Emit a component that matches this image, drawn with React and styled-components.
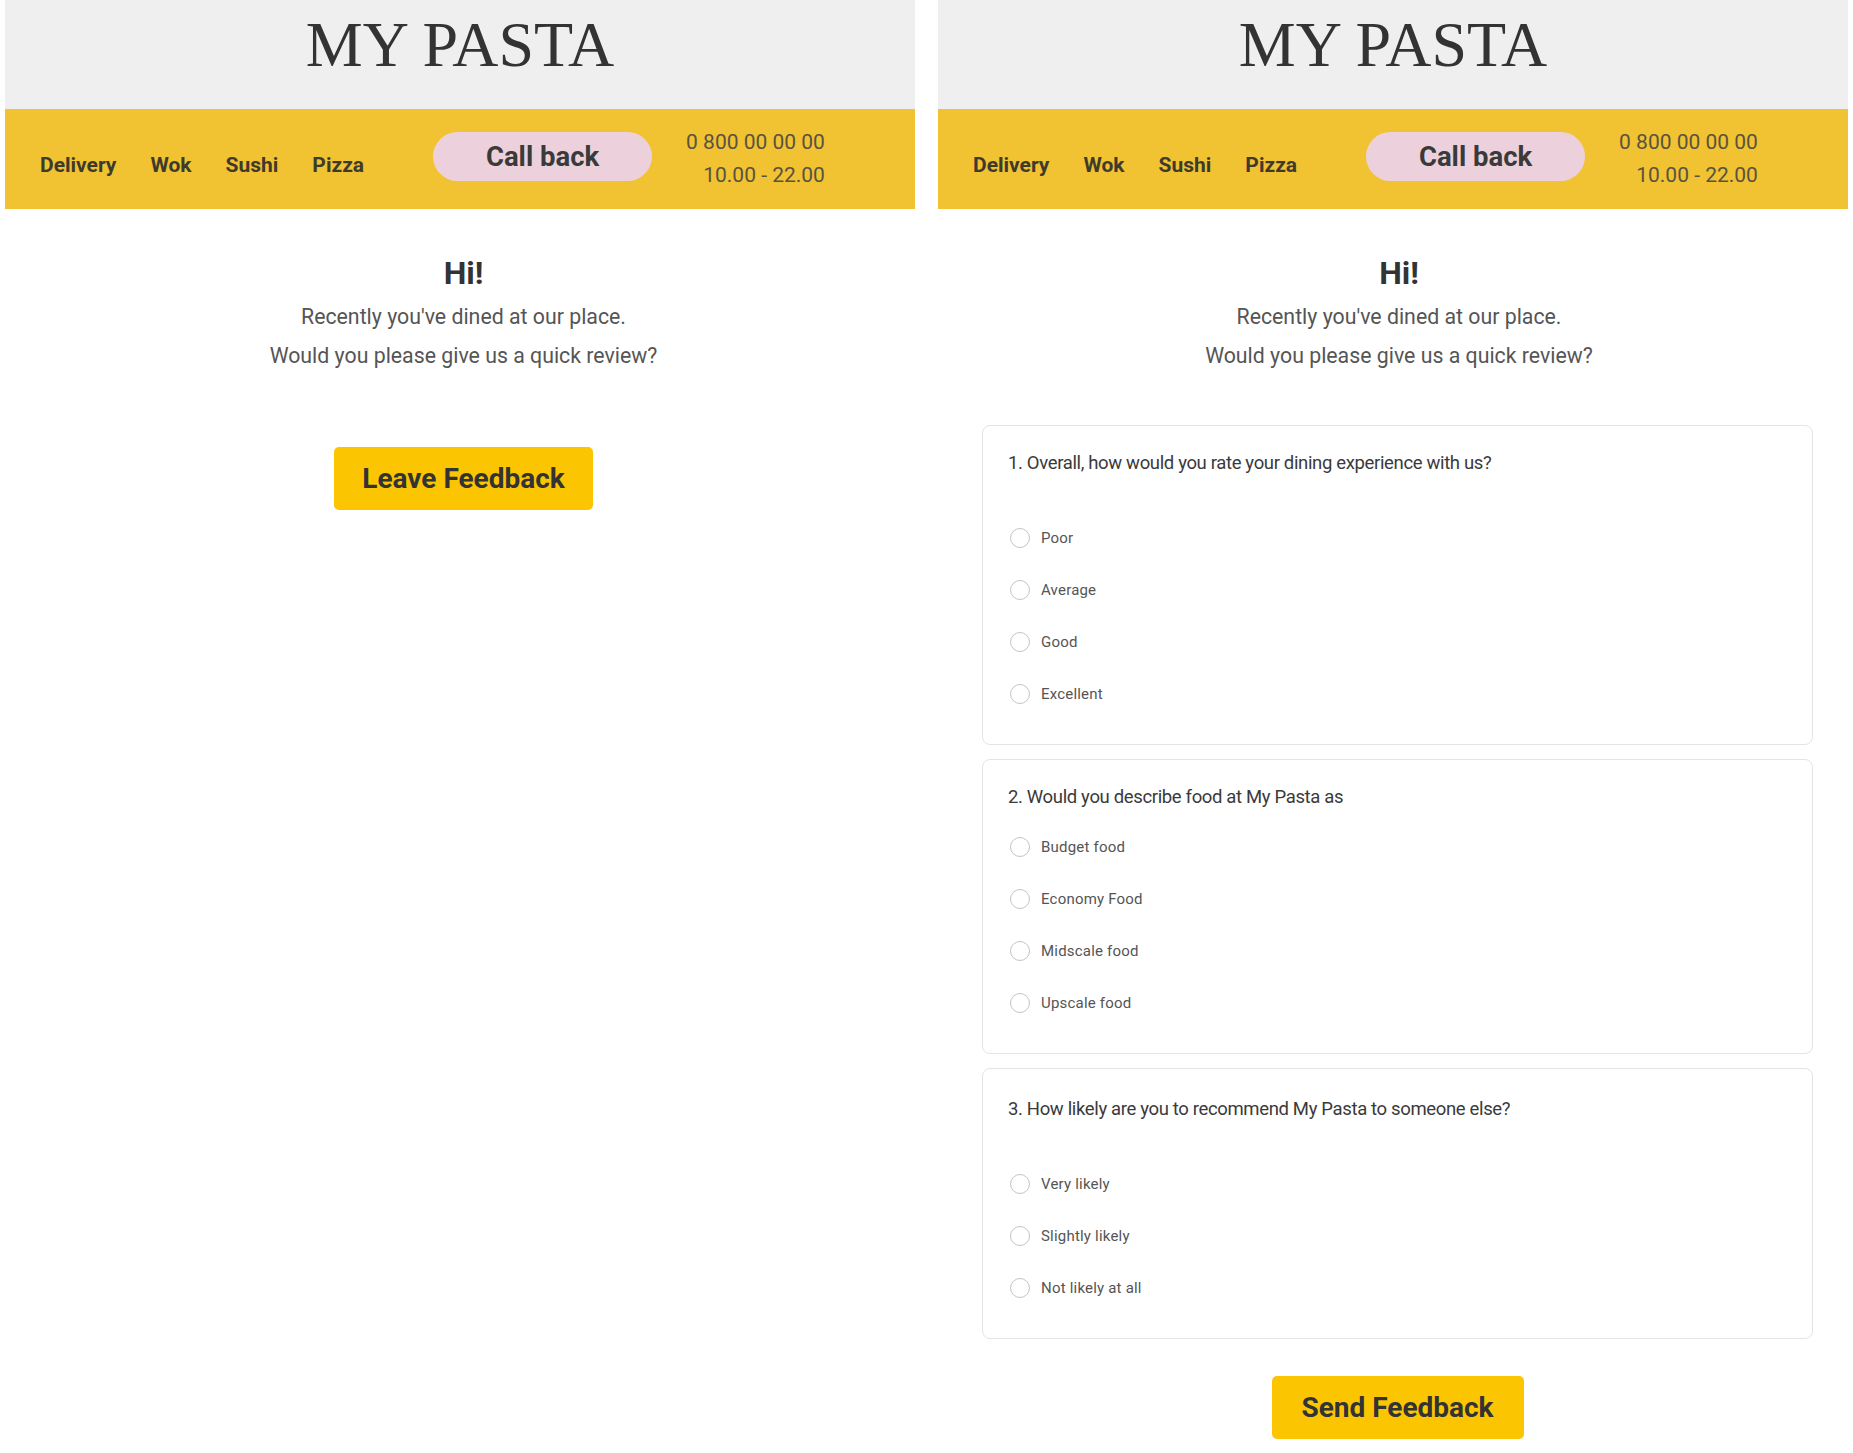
import React from 'react';
import styled, { createGlobalStyle } from 'styled-components';

const GlobalStyle = createGlobalStyle`
  body {
    margin: 0;
    background: #fff;
    font-family: Roboto, 'Liberation Sans', sans-serif;
  }
  * {
    box-sizing: border-box;
  }
`;

const questions = [
  {
    title: '1. Overall, how would you rate your dining experience with us?',
    spaced: true,
    options: ['Poor', 'Average', 'Good', 'Excellent'],
  },
  {
    title: '2. Would you describe food at My Pasta as',
    spaced: false,
    options: ['Budget food', 'Economy Food', 'Midscale food', 'Upscale food'],
  },
  {
    title: '3. How likely are you to recommend My Pasta to someone else?',
    spaced: true,
    top: '28px',
    options: ['Very likely', 'Slightly likely', 'Not likely at all'],
  },
];

const App = () => {
  return (
    <>
      <GlobalStyle />
      <Screens>
        <Screen>
          <SiteHeader />
          <Main shift="7px">
            <Intro />
            <Center>
              <YellowButton width="259px">Leave Feedback</YellowButton>
            </Center>
          </Main>
        </Screen>
        <Screen>
          <SiteHeader />
          <Main shift="12px">
            <Intro />
          </Main>
          <Form>
            {questions.map((q) => (
              <QuestionCard key={q.title} {...q} />
            ))}
            <Center>
              <YellowButton width="252px" top="23px">
                Send Feedback
              </YellowButton>
            </Center>
          </Form>
        </Screen>
      </Screens>
    </>
  );
};

export default App;

const Screens = styled.div`
  display: flex;
  gap: 23px;
  padding-left: 5px;
`;

const Screen = styled.div`
  width: 910px;
  flex-shrink: 0;
`;

const Logo = styled.div`
  height: 109px;
  background: #efefef;
  padding-top: 13px;
  text-align: center;
  font-family: 'Liberation Serif', 'Times New Roman', serif;
  font-size: 64px;
  line-height: 64px;
  color: #333;
`;

const NavBar = styled.div`
  height: 100px;
  background: #f1c232;
  display: flex;
  align-items: center;
  padding-left: 35px;
`;

const Links = styled.nav`
  display: flex;
  gap: 34px;
  margin-top: 11px;
  a {
    font-size: 21px;
    font-weight: 700;
    color: #3f3b2c;
    text-decoration: none;
  }
`;

const CallBack = styled.button`
  margin-left: 69px;
  margin-top: -5px;
  width: 219px;
  height: 49px;
  border: none;
  border-radius: 25px;
  background: #ecd1dd;
  font-family: Roboto, sans-serif;
  font-size: 27.5px;
  font-weight: 700;
  color: #3a3a3a;
  cursor: pointer;
`;

const Contacts = styled.div`
  margin-left: 34px;
  text-align: right;
  font-size: 21px;
  line-height: 33px;
  color: #59533f;
`;

const SiteHeader = () => {
  return (
    <header>
      <Logo>MY PASTA</Logo>
      <NavBar>
        <Links>
          <a href="#delivery">Delivery</a>
          <a href="#wok">Wok</a>
          <a href="#sushi">Sushi</a>
          <a href="#pizza">Pizza</a>
        </Links>
        <CallBack>Call back</CallBack>
        <Contacts>
          <div>0 800 00 00 00</div>
          <div>10.00 - 22.00</div>
        </Contacts>
      </NavBar>
    </header>
  );
};

const Main = styled.main`
  padding-left: ${(props) => props.shift};
`;

const Greeting = styled.div`
  text-align: center;
  margin-top: 46px;
  h1 {
    margin: 0;
    font-size: 32px;
    line-height: 37px;
    font-weight: 700;
    color: #333;
  }
  p {
    margin: 5px 0 0;
    font-size: 21.3px;
    line-height: 39px;
    color: #555;
  }
`;

const Intro = () => {
  return (
    <Greeting>
      <h1>Hi!</h1>
      <p>
        Recently you've dined at our place.
        <br />
        Would you please give us a quick review?
      </p>
    </Greeting>
  );
};

const Center = styled.div`
  display: flex;
  justify-content: center;
`;

const YellowButton = styled.button`
  margin-top: ${(props) => props.top || '72px'};
  width: ${(props) => props.width};
  height: 63px;
  border: none;
  border-radius: 5px;
  background: #fcc502;
  font-family: Roboto, sans-serif;
  font-size: 28px;
  font-weight: 700;
  color: #333;
  cursor: pointer;
`;

const Form = styled.div`
  margin: 50px 0 0 44px;
  width: 831px;
  display: flex;
  flex-direction: column;
  gap: 14px;
`;

const Card = styled.div`
  border: 1px solid #e4e4e4;
  border-radius: 8px;
  padding: ${(props) => props.top || '25px'} 26px 24px 27px;
`;

const Question = styled.div`
  margin-left: -2px;
  font-size: 18.5px;
  line-height: 24px;
  letter-spacing: -0.35px;
  color: #3a3a3a;
  margin-bottom: ${(props) => (props.spaced ? '37px' : '12px')};
`;

const Option = styled.label`
  display: flex;
  align-items: center;
  gap: 11px;
  height: 52px;
  font-size: 15px;
  letter-spacing: 0.2px;
  color: #555;
  cursor: pointer;
`;

const Radio = styled.input.attrs({ type: 'radio' })`
  appearance: none;
  margin: 0;
  width: 20px;
  height: 20px;
  border: 1.5px solid #c4c4c4;
  border-radius: 50%;
  background: #fff;
`;

const QuestionCard = ({ title, spaced, top, options }) => {
  return (
    <Card top={top}>
      <Question spaced={spaced}>{title}</Question>
      {options.map((opt) => (
        <Option key={opt}>
          <Radio name={title} />
          {opt}
        </Option>
      ))}
    </Card>
  );
};
